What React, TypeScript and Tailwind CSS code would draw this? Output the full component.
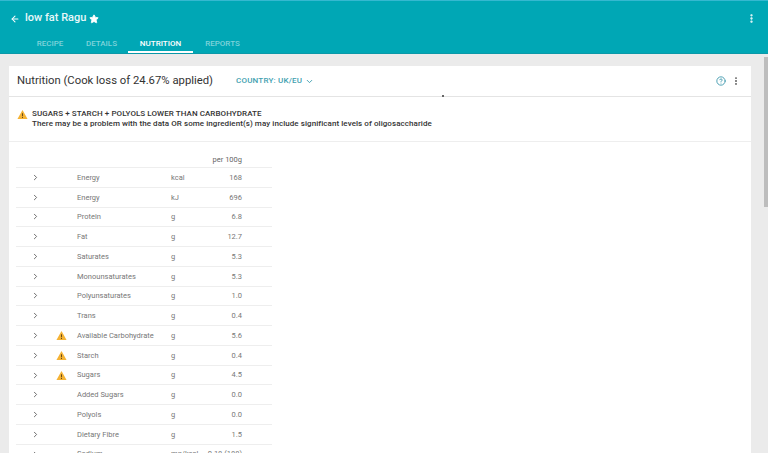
import React from 'react';
import { ArrowLeft, Star, EllipsisVertical, ChevronDown, ChevronRight, CircleHelp } from 'lucide-react';

type Row = { name: string; unit: string; value: string; warn?: boolean };

const rows: Row[] = [
    { name: 'Energy', unit: 'kcal', value: '168' },
    { name: 'Energy', unit: 'kJ', value: '696' },
    { name: 'Protein', unit: 'g', value: '6.8' },
    { name: 'Fat', unit: 'g', value: '12.7' },
    { name: 'Saturates', unit: 'g', value: '5.3' },
    { name: 'Monounsaturates', unit: 'g', value: '5.3' },
    { name: 'Polyunsaturates', unit: 'g', value: '1.0' },
    { name: 'Trans', unit: 'g', value: '0.4' },
    { name: 'Available Carbohydrate', unit: 'g', value: '5.6', warn: true },
    { name: 'Starch', unit: 'g', value: '0.4', warn: true },
    { name: 'Sugars', unit: 'g', value: '4.5', warn: true },
    { name: 'Added Sugars', unit: 'g', value: '0.0' },
    { name: 'Polyols', unit: 'g', value: '0.0' },
    { name: 'Dietary Fibre', unit: 'g', value: '1.5' },
    { name: 'Sodium', unit: 'mg/kcal', value: '0.18 (188)' },
];

const WarnIcon = ({ size }: { size: number }) => (
    <svg width={size} height={size} viewBox="0 0 24 24">
        <path d="M1 22 L12 2 L23 22 Z" fill="#f5b335" />
        <path d="M11 9h2v7h-2zM11 17.5h2v2h-2z" fill="#5a4318" />
    </svg>
);

const tabs = [
    { label: 'RECIPE', cls: 'w-[50px] text-[#7fd3da]' },
    { label: 'DETAILS', cls: 'w-[53px] text-[#7fd3da]' },
    { label: 'NUTRITION', cls: 'w-[65px] text-white border-b-2 border-b-white' },
    { label: 'REPORTS', cls: 'w-[59px] text-[#7fd3da]' },
];

export default function App() {
    return (
        <div className="h-[453px] w-[768px] overflow-hidden flex flex-col bg-[#ebebeb] font-['Roboto',sans-serif]">
            {/* App bar */}
            <div className="h-[54px] shrink-0 bg-[#00a7b5] border-t border-t-[#35b8d0] border-b border-b-[#0b98a8] flex flex-col">
                <div className="h-[35px] flex items-center pl-[10px] pr-[11px] text-white">
                    <ArrowLeft className="w-[10px] h-[10px] mr-[5px]" strokeWidth={2.5} />
                    <span className="text-[11px] font-medium text-[#e8f8f9]">low fat Ragu</span>
                    <Star className="w-[10px] h-[10px] ml-[3px] fill-white" />
                    <EllipsisVertical className="w-[11px] h-[11px] ml-auto" strokeWidth={3} />
                </div>
                <div className="flex-1 flex pl-[25px]">
                    {tabs.map((t) => (
                        <div key={t.label} className={`text-center text-[8px] leading-[15px] font-medium ${t.cls}`}>
                            {t.label}
                        </div>
                    ))}
                </div>
            </div>

            <div className="flex-1 flex min-h-0">
                {/* Card */}
                <div className="relative w-[742px] ml-[9px] mt-[12px] bg-white flex flex-col">
                    <div className="absolute left-[433px] top-[29px] w-[2px] h-[2px] bg-[#666]" />
                    <div className="h-[31px] shrink-0 flex items-center pl-[8px] pr-[10px] border-b border-b-[#e4e4e4]">
                        <span className="text-[11.3px] text-[#333]">Nutrition (Cook loss of 24.67% applied)</span>
                        <span className="ml-[23px] text-[8px] tracking-[0.2px] font-medium text-[#3f9fb0]">COUNTRY: UK/EU</span>
                        <ChevronDown className="w-[9px] h-[9px] ml-[3px] text-[#3f9fb0]" strokeWidth={2.5} />
                        <CircleHelp className="w-[10px] h-[10px] ml-auto text-[#2e8fa6]" />
                        <EllipsisVertical className="w-[10px] h-[10px] ml-[5px] text-[#555]" strokeWidth={2.5} />
                    </div>

                    <div className="h-[45px] shrink-0 flex items-start pl-[8px] pt-[12px] border-b border-b-[#eeeeee]">
                        <div className="mr-[4px]">
                            <WarnIcon size={11} />
                        </div>
                        <div className="text-[8px] leading-[10px] tracking-[0.07px] font-medium text-[#333]">
                            <div>SUGARS + STARCH + POLYOLS LOWER THAN CARBOHYDRATE</div>
                            <div>There may be a problem with the data OR some ingredient(s) may include significant levels of oligosaccharide</div>
                        </div>
                    </div>

                    {/* Table */}
                    <div className="w-[256px] ml-[7px] mt-[11px]">
                        <div className="h-[15px] flex justify-end items-center pr-[30px] text-[7.5px] text-[#666] border-b border-b-[#eeeeee]">
                            per 100g
                        </div>
                        {rows.map((r, i) => (
                            <div key={i} className="h-[19.77px] shrink-0 flex items-center border-b border-b-[#eeeeee] text-[7.5px] text-[#777]">
                                <div className="w-[40px] pl-[15px]">
                                    <ChevronRight className="w-[9px] h-[9px] text-[#666]" strokeWidth={2.5} />
                                </div>
                                <div className="w-[21px]">{r.warn && <WarnIcon size={11} />}</div>
                                <div className="w-[94px] whitespace-nowrap">{r.name}</div>
                                <div className="w-[71px] whitespace-nowrap">{r.unit}</div>
                                <div className="w-0 flex justify-end whitespace-nowrap">{r.value}</div>
                            </div>
                        ))}
                    </div>
                </div>

                {/* Scrollbar */}
                <div className="w-[4px] ml-[13px] h-[150px] mt-[3px] bg-[#bdbdbd]" />
            </div>
        </div>
    );
}
